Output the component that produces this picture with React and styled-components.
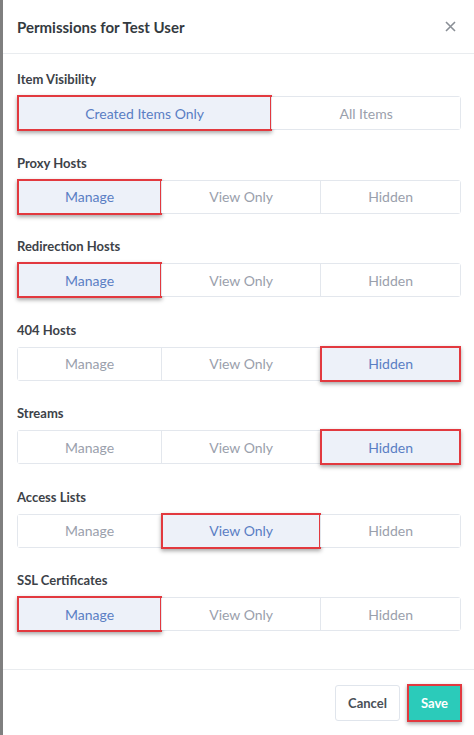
import React, { useState } from 'react';
import styled, { createGlobalStyle } from 'styled-components';

const GlobalStyle = createGlobalStyle`
  *, *::before, *::after {
    box-sizing: border-box;
  }
  html, body {
    margin: 0;
    padding: 0;
    background: #fff;
  }
  body {
    font-family: Lato, "Noto Sans", sans-serif;
    color: #495057;
  }
`;

const Page = styled.div`
  display: flex;
  min-height: 735px;
`;

const Edge = styled.div`
  width: 3px;
  background: #7f7f7f;
`;

const Modal = styled.div`
  flex: 1;
  display: flex;
  flex-direction: column;
  background: #fff;
`;

const Header = styled.div`
  height: 54px;
  display: flex;
  align-items: center;
  justify-content: space-between;
  padding: 0 18px 0 14px;
  border-bottom: 1px solid #e9ecef;
`;

const Title = styled.h5`
  margin: 0;
  font-size: 15px;
  font-weight: 700;
  color: #343a40;
`;

const Close = styled.button`
  border: 0;
  background: none;
  padding: 0;
  display: flex;
  color: #8a8f96;
  cursor: pointer;
`;

const Body = styled.div`
  padding: 16px 13px 14px 14px;
`;

const Section = styled.div`
  margin-bottom: 23.5px;
`;

const Label = styled.div`
  font-size: 13px;
  line-height: 18px;
  font-weight: 700;
  color: #3d4248;
  margin-bottom: 8px;
`;

const Group = styled.div`
  display: flex;
  height: 34px;
  border: 1px solid #e3e7ed;
  border-radius: 3px;
`;

const Option = styled.button`
  flex: 1 1 auto;
  position: relative;
  border: 0;
  border-left: 1px solid #e3e7ed;
  background: ${(p) => (p.$active ? '#edf1f9' : '#fff')};
  color: ${(p) => (p.$active ? '#5a7ec4' : '#9aa0ac')};
  font-family: inherit;
  font-size: 14px;
  padding: 0 20px;
  cursor: pointer;

  &:first-child {
    border-left: 0;
  }

  &::after {
    content: '';
    display: ${(p) => (p.$active ? 'block' : 'none')};
    position: absolute;
    inset: -2px -1px -2px -1px;
    border: 2px solid #e2393f;
    box-shadow: 0 2px 4px rgba(0, 0, 0, 0.35);
    pointer-events: none;
  }
`;

const Footer = styled.div`
  display: flex;
  justify-content: flex-end;
  gap: 8px;
  padding: 15px 13px 14px;
  border-top: 1px solid #e9ecef;
`;

const Button = styled.button`
  position: relative;
  height: 36px;
  padding: 0 12px;
  border-radius: 3px;
  font-family: inherit;
  font-size: 13px;
  font-weight: 700;
  cursor: pointer;
  border: 1px solid ${(p) => (p.$primary ? '#2bcbba' : '#e0e5ec')};
  background: ${(p) => (p.$primary ? '#2bcbba' : '#fff')};
  color: ${(p) => (p.$primary ? '#fff' : '#495057')};

  ${(p) =>
    p.$primary &&
    `
    &::after {
      content: '';
      position: absolute;
      inset: -2px;
      border: 2px solid #e2393f;
      box-shadow: 0 2px 4px rgba(0, 0, 0, 0.35);
      pointer-events: none;
    }
  `}
`;

const LEVELS = ['Manage', 'View Only', 'Hidden'];

const initial = [
  { name: 'Item Visibility', options: ['Created Items Only', 'All Items'], value: 'Created Items Only' },
  { name: 'Proxy Hosts', options: LEVELS, value: 'Manage' },
  { name: 'Redirection Hosts', options: LEVELS, value: 'Manage' },
  { name: '404 Hosts', options: LEVELS, value: 'Hidden' },
  { name: 'Streams', options: LEVELS, value: 'Hidden' },
  { name: 'Access Lists', options: LEVELS, value: 'View Only' },
  { name: 'SSL Certificates', options: LEVELS, value: 'Manage' },
];

export default function App() {
  const [perms, setPerms] = useState(initial);

  const pick = (i, v) =>
    setPerms((list) => list.map((p, j) => (j === i ? { ...p, value: v } : p)));

  return (
    <Page>
      <GlobalStyle />
      <Edge />
      <Modal>
        <Header>
          <Title>Permissions for Test User</Title>
          <Close aria-label="Close">
            <svg width="11" height="11" viewBox="0 0 11 11">
              <path d="M1 1L10 10M10 1L1 10" stroke="currentColor" strokeWidth="1.6" />
            </svg>
          </Close>
        </Header>
        <Body>
          {perms.map((p, i) => (
            <Section key={p.name}>
              <Label>{p.name}</Label>
              <Group>
                {p.options.map((o) => (
                  <Option key={o} $active={p.value === o} onClick={() => pick(i, o)}>
                    {o}
                  </Option>
                ))}
              </Group>
            </Section>
          ))}
        </Body>
        <Footer>
          <Button>Cancel</Button>
          <Button $primary>Save</Button>
        </Footer>
      </Modal>
    </Page>
  );
}
